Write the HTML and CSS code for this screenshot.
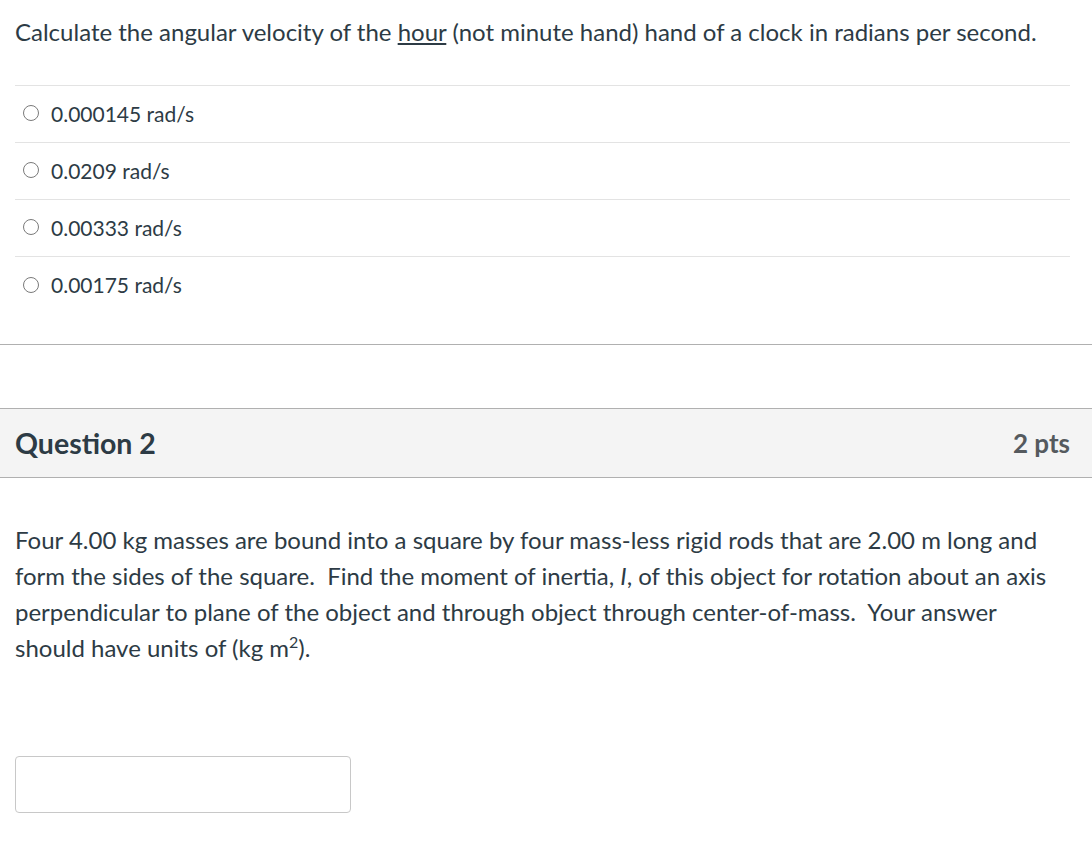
FILE: index.html
```html
<!DOCTYPE html>
<html>
<head>
<meta charset="utf-8">
<link rel="stylesheet" href="styles.css">
</head>
<body>
<div class="page">
  <section class="q1">
    <p class="qtext">Calculate the angular velocity of the <u>hour</u> (not minute hand) hand of a clock in radians per second.</p>
    <div class="answers">
      <label class="answer"><span class="radio"></span><span>0.000145 rad/s</span></label>
      <label class="answer"><span class="radio"></span><span>0.0209 rad/s</span></label>
      <label class="answer"><span class="radio"></span><span>0.00333 rad/s</span></label>
      <label class="answer"><span class="radio"></span><span>0.00175 rad/s</span></label>
    </div>
  </section>
  <div class="divider"></div>
  <section class="q2">
    <header class="qhead">
      <h2 class="qtitle">Question 2</h2>
      <span class="pts">2 pts</span>
    </header>
    <div class="qbody">
      <p class="qtext2">Four 4.00 kg masses are bound into a square by four mass-less rigid rods that are 2.00 m long and form the sides of the square.&nbsp; Find the moment of inertia, <i>I</i>, of this object for rotation about an axis perpendicular to plane of the object and through object through center-of-mass.&nbsp; Your answer should have units of (kg m<sup>2</sup>).</p>
      <div class="inputbox"></div>
    </div>
  </section>
</div>
</body>
</html>
```
FILE: styles.css
```css
html, body {
  margin: 0;
  padding: 0;
  background: #fff;
}
body {
  font-family: Lato, "Open Sans", sans-serif;
  color: #2d3b45;
}
.page {
  width: 1092px;
}
.q1 {
  padding: 0 22px 0 15px;
}
.qtext {
  margin: 0;
  padding-top: 16px;
  font-size: 24px;
  line-height: 32px;
  height: 69px;
  border-bottom: 1px solid #e3e3e3;
}
.answer {
  display: flex;
  align-items: center;
  gap: 12px;
  height: 57px;
  padding-left: 8px;
  padding-bottom: 2px;
  box-sizing: border-box;
  font-size: 21px;
  border-bottom: 1px solid #e3e3e3;
}
.answer:last-child {
  border-bottom: none;
}
.radio {
  width: 16px;
  height: 16px;
  border: 1px solid #7a7a7a;
  border-radius: 50%;
  box-sizing: border-box;
  flex: none;
}
.divider {
  margin-top: 30px;
  border-top: 1px solid #b0b0b0;
}
.q2 {
  margin-top: 63px;
}
.qhead {
  display: flex;
  align-items: center;
  justify-content: space-between;
  height: 68px;
  padding: 0 22px 0 15px;
  background: #f4f4f4;
  border-top: 1px solid #b0b0b0;
  border-bottom: 1px solid #b0b0b0;
}
.qtitle {
  margin: 0;
  font-size: 28.5px;
  font-weight: 700;
  color: #2d3b45;
}
.pts {
  font-size: 26px;
  font-weight: 700;
  color: #555a5e;
}
.qbody {
  padding: 44px 22px 0 15px;
}
.qtext2 {
  margin: 0;
  font-size: 24px;
  line-height: 36px;
}
.qtext2 sup {
  font-size: 16px;
  line-height: 0;
}
.inputbox {
  margin-top: 90px;
  width: 336px;
  height: 57px;
  box-sizing: border-box;
  border: 1px solid #c8c8c8;
  border-radius: 4px;
}
```
